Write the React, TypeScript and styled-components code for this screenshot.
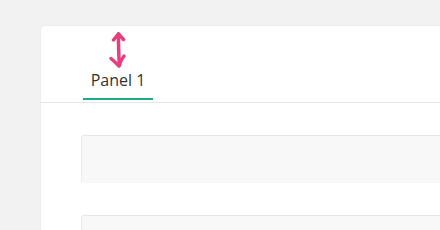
import React from "react";
import styled, { createGlobalStyle } from "styled-components";

const Global = createGlobalStyle`
  html, body { margin: 0; padding: 0; background: #f2f2f2; overflow: hidden; }
  body { font-family: "Open Sans", "Noto Sans", sans-serif; }
`;

const Page = styled.div`
  width: 440px;
  height: 230px;
  padding: 26px 0 0 41px;
  box-sizing: border-box;
  overflow: hidden;
`;

const Card = styled.div`
  width: 480px;
  height: 260px;
  background: #ffffff;
  border-radius: 4px 0 0 0;
  box-shadow: 0 0 2px rgba(0, 0, 0, 0.08);
`;

const Header = styled.div`
  height: 76px;
  border-bottom: 1px solid #e6e6e6;
  display: flex;
  align-items: flex-end;
  padding-left: 42px;
`;

const Tab = styled.div`
  position: relative;
  width: 70px;
  height: 70px;
  display: flex;
  flex-direction: column;
  align-items: center;
  justify-content: flex-end;
  padding-bottom: 2px;
  box-sizing: border-box;
`;

const TabLabel = styled.span`
  font-size: 16px;
  color: #333333;
  line-height: 20px;
  margin-bottom: 8px;
`;

const Underline = styled.div`
  width: 70px;
  height: 2px;
  background: #1eab8b;
`;

const Arrow = styled.svg`
  position: absolute;
  left: 23px;
  top: 0px;
`;

const Body = styled.div`
  padding: 32px 0 0 40px;
  display: flex;
  flex-direction: column;
  gap: 32px;
`;

const Field = styled.div`
  height: 48px;
  background: #f8f8f8;
  border-radius: 3px 0 0 3px;
  border-top: 1px solid #e6e6e6;
  border-left: 1px solid #ececec;
  box-sizing: border-box;
`;

export default function App() {
  return (
    <>
      <Global />
      <Page>
        <Card>
          <Header>
            <Tab>
              <Arrow width="24" height="40" viewBox="0 0 24 40">
                <g
                  fill="none"
                  stroke="#e83d7c"
                  strokeWidth="3.5"
                  strokeLinecap="round"
                  strokeLinejoin="round"
                >
                  <path d="M7.5 8 L12.5 1.8 L17.5 7.5" />
                  <path d="M12.5 2.2 C12.3 12 12.8 22 13.3 33" />
                  <path d="M5 26.5 C8 29 10.5 31.5 13 34 C14 30.5 15.5 27 18 24" />
                </g>
              </Arrow>
              <TabLabel>Panel 1</TabLabel>
              <Underline />
            </Tab>
          </Header>
          <Body>
            <Field />
            <Field />
          </Body>
        </Card>
      </Page>
    </>
  );
}
